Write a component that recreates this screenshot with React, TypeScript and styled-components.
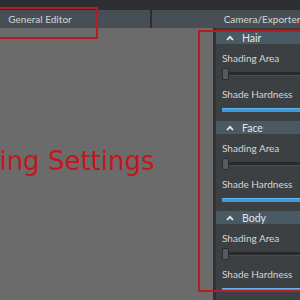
import React from "react";
import styled, { createGlobalStyle } from "styled-components";

const Global = createGlobalStyle`
  html, body { margin: 0; padding: 0; }
  body {
    width: 300px;
    height: 300px;
    overflow: hidden;
    background: #2e3033;
    font-family: "Lato", "Open Sans", sans-serif;
  }
`;

const Root = styled.div`
  position: relative;
  width: 300px;
  height: 300px;
  overflow: hidden;
  display: flex;
  flex-direction: column;
  background: #2e3033;
`;

const TopStrip = styled.div`
  height: 10px;
  flex: none;
  background: #2c2e31;
`;

const TabBar = styled.div`
  height: 18px;
  flex: none;
  display: flex;
  gap: 2px;
  margin-left: -70px;
  background: #2c2e31;
`;

const Tab = styled.div`
  width: 220px;
  flex: none;
  display: flex;
  align-items: center;
  justify-content: center;
  background: #484f54;
  color: #c9cdd0;
  font-size: 10px;
  font-weight: 500;
`;

const Main = styled.div`
  flex: 1;
  display: flex;
  min-height: 0;
`;

const Canvas = styled.div`
  width: 213px;
  flex: none;
  background: #6b6b6b;
  overflow: hidden;
  padding-top: 118px;
  box-sizing: border-box;
`;

const Title = styled.div`
  margin-left: -66px;
  white-space: nowrap;
  font-family: "DejaVu Sans", sans-serif;
  font-size: 26px;
  line-height: 30px;
  color: #c4161c;
`;

const Panel = styled.div`
  flex: 1;
  border-left: 3px solid #2f3234;
  background: #3b3e41;
  padding-top: 3px;
  overflow: hidden;
  display: flex;
  flex-direction: column;
`;

const Section = styled.div`
  height: 90px;
  flex: none;
  display: flex;
  flex-direction: column;
`;

const Header = styled.div`
  height: 13px;
  flex: none;
  display: flex;
  align-items: center;
  gap: 8px;
  padding-left: 10px;
  background: #4a5a64;
  color: #e2e6e8;
  font-size: 10.5px;
`;

const Body = styled.div`
  display: flex;
  flex-direction: column;
  padding: 7px 0 0 6px;
  background: #3d4043;
  flex: 1;
`;

const Label = styled.div<{ $gap?: number }>`
  height: 14px;
  line-height: 14px;
  font-size: 10px;
  color: #d4d6d8;
  white-space: nowrap;
  margin-top: ${(p) => p.$gap ?? 0}px;
`;

const SliderRow = styled.div`
  position: relative;
  margin-top: 3px;
  height: 11px;
  display: flex;
  align-items: center;
`;

const Track = styled.div`
  flex: 1;
  height: 3px;
  background: #27292b;
  border-bottom: 1px solid #4a4d50;
`;

const Handle = styled.div`
  position: absolute;
  left: 0;
  top: 0;
  width: 5px;
  height: 10px;
  background: #585b5e;
  border: 1px solid #2a2c2e;
  border-radius: 1px;
`;

const Bar = styled.div`
  margin-top: 7px;
  height: 3px;
  background: #3d9ddc;
  border-top: 1px solid #5fb4ea;
`;

const Highlight = styled.div<{ $l: number; $t: number; $w: number; $h: number }>`
  position: absolute;
  left: ${(p) => p.$l}px;
  top: ${(p) => p.$t}px;
  width: ${(p) => p.$w}px;
  height: ${(p) => p.$h}px;
  border: 2px solid #b81c22;
  box-sizing: border-box;
  pointer-events: none;
`;

const Caret = () => (
  <svg width="8" height="6" viewBox="0 0 8 6">
    <path d="M1 5 L4 1.8 L7 5" fill="none" stroke="#e6eaec" strokeWidth="1.8" />
  </svg>
);

const sections = ["Hair", "Face", "Body"];

export default function App() {
  return (
    <Root>
      <Global />
      <TopStrip />
      <TabBar>
        <Tab>General Editor</Tab>
        <Tab>Camera/Exporter</Tab>
      </TabBar>
      <Main>
        <Canvas>
          <Title>Shading Settings</Title>
        </Canvas>
        <Panel>
          {sections.map((s) => (
            <Section key={s}>
              <Header>
                <Caret />
                <span>{s}</span>
              </Header>
              <Body>
                <Label>Shading Area</Label>
                <SliderRow>
                  <Track />
                  <Handle />
                </SliderRow>
                <Label $gap={8}>Shade Hardness</Label>
                <Bar />
              </Body>
            </Section>
          ))}
        </Panel>
      </Main>
      <Highlight $l={-5} $t={7} $w={103} $h={32} />
      <Highlight $l={198} $t={30} $w={120} $h={262} />
    </Root>
  );
}
